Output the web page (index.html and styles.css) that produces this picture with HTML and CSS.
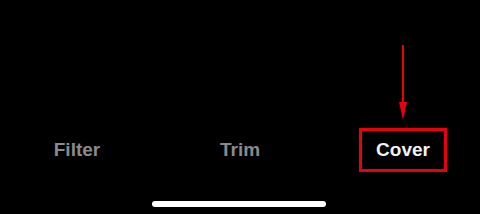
FILE: index.html
```html
<!DOCTYPE html>
<html lang="en">
<head>
    <meta charset="UTF-8">
    <meta name="viewport" content="width=device-width, initial-scale=1.0">
    <title>Edit Video</title>
    <link rel="stylesheet" href="styles.css">
</head>
<body>
    <div class="screen">
        <nav class="tabs">
            <div class="tab"><span class="tab-label">Filter</span></div>
            <div class="tab"><span class="tab-label">Trim</span></div>
            <div class="tab active"><span class="tab-label">Cover</span></div>
        </nav>
        <div class="home-indicator"></div>

        <!-- annotation arrow pointing at the Cover tab -->
        <svg class="arrow" xmlns="http://www.w3.org/2000/svg" viewBox="0 0 10 76" width="10" height="76">
            <line x1="5" y1="0" x2="5" y2="60" stroke="#e8000b" stroke-width="2"></line>
            <polygon points="1,57 9,57 5,75" fill="#e8000b"></polygon>
        </svg>
    </div>
</body>
</html>
```

FILE: styles.css
```css
/* General Styles */
body {
    margin: 0;
    padding: 0;
    background: #000000;
    font-family: 'Liberation Sans', Arial, sans-serif;
    overflow: hidden;
}

.screen {
    position: relative;
    width: 480px;
    height: 214px;
    display: flex;
    flex-direction: column;
    align-items: center;
    overflow: hidden;
}

/* Bottom tabs */
.tabs {
    margin-top: 128px;
    display: grid;
    grid-template-columns: repeat(3, 163px);
    justify-content: center;
    width: 480px;
}

.tab {
    display: flex;
    justify-content: center;
}

.tab-label {
    display: inline-block;
    padding: 6px 14px;
    border: 3px solid transparent;
    font-size: 19px;
    line-height: 26px;
    font-weight: 700;
    color: #8a8a8a;
}

.tab.active .tab-label {
    color: #f2f2f2;
    border-color: #e8000b;
}

.home-indicator {
    margin-top: 29px;
    margin-left: -2px;
    width: 174px;
    height: 6px;
    border-radius: 3px;
    background: #ffffff;
}

/* Annotation */
.arrow {
    position: absolute;
    left: 398px;
    top: 45px;
}
```
